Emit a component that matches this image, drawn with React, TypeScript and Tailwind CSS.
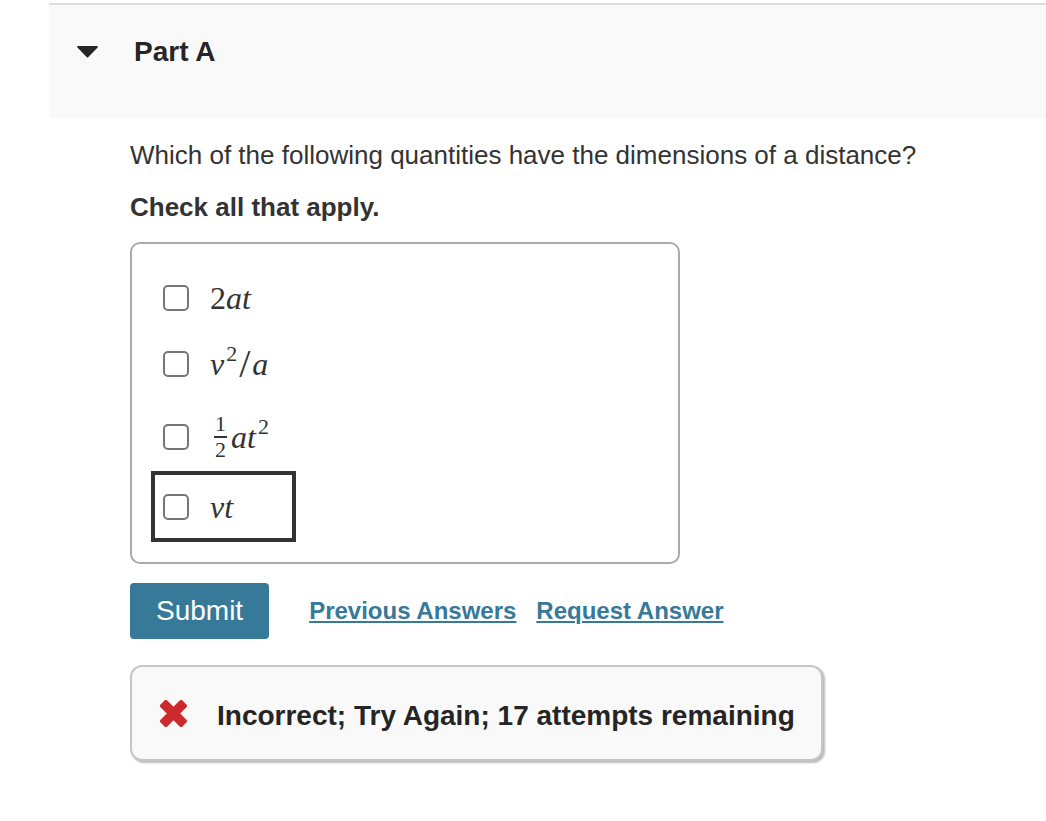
import React, { useState } from 'react';

interface Choice {
  id: string;
  label: string;
  rowClass: string;
  math: React.ReactNode;
}

const Sup: React.FC<{ children: React.ReactNode }> = ({ children }) => (
  <span className="mb-5 ml-0.5 text-[22px] leading-6 not-italic">{children}</span>
);

const choices: Choice[] = [
  {
    id: 'choice-2at',
    label: '2at',
    rowClass: 'h-[66px]',
    math: <><span className="not-italic">2</span>at</>,
  },
  {
    id: 'choice-v2-a',
    label: 'v squared over a',
    rowClass: 'h-[66px]',
    math: <>v<Sup>2</Sup><span className="mx-0.5 text-[40px] not-italic">/</span>a</>,
  },
  {
    id: 'choice-half-at2',
    label: 'one half a t squared',
    rowClass: 'mt-1.5 h-[68px]',
    math: (
      <>
        <span className="mx-1 flex flex-col items-center text-[22px] leading-6 not-italic">
          <span className="border-b-2 border-[#333] px-px">1</span>
          <span>2</span>
        </span>
        at<Sup>2</Sup>
      </>
    ),
  },
  { id: 'choice-vt', label: 'vt', rowClass: 'h-[71px]', math: <>vt</> },
];

const PartHeader: React.FC = () => {
  return (
    <header className="border-t-2 border-[#ddd] bg-[#f9f9f9] px-7 pt-[27px] pb-[46px]">
      <h2 className="text-[28px] leading-10 font-bold text-[#252525]">
        <button type="button" aria-expanded="true" className="flex items-center gap-9">
          <svg viewBox="0 0 21 12" className="h-3 w-[21px]" aria-hidden="true">
            <path d="M1 0h19q1.4.3.6 1.4L11.4 11q-.9 1-1.8 0L.4 1.4Q-.4.3 1 0z" fill="#252525" />
          </svg>
          Part A
        </button>
      </h2>
    </header>
  );
};

const ChoiceList: React.FC = () => {
  const [focused, setFocused] = useState('choice-vt');

  return (
    <fieldset className="mt-[15px] max-w-[550px] rounded-[10px] border-2 border-[#aaa] px-[19px] pt-[21px] pb-5">
      {choices.map((choice) => (
        <div
          key={choice.id}
          className={`flex w-[145px] items-center gap-[21px] border-4 pl-2 ${choice.rowClass} ${
            focused === choice.id ? 'border-[#333]' : 'border-transparent'
          }`}
        >
          <input
            id={choice.id}
            type="checkbox"
            aria-label={choice.label}
            onFocus={() => setFocused(choice.id)}
            className="size-[26px] shrink-0 appearance-none rounded-[5px] border-2 border-[#767676] bg-white outline-none checked:bg-[#367999]"
          />
          <label
            htmlFor={choice.id}
            className="flex items-center font-['Liberation_Serif',serif] text-[32px] leading-9 text-[#333] italic"
          >
            {choice.math}
          </label>
        </div>
      ))}
    </fieldset>
  );
};

const Feedback: React.FC = () => {
  return (
    <div
      role="status"
      className="mt-[26px] flex w-fit items-center gap-[29px] rounded-xl border-2 border-[#c5c5c5] bg-[#f9f9f9] pt-[29px] pr-[26px] pb-[23px] pl-7 text-[28px] leading-10 font-bold text-[#252525] shadow-[2px_2px_2px_#bbb]"
    >
      <svg viewBox="0 0 28 28" className="-mt-1 size-7 shrink-0" fill="#cb2b2d" aria-hidden="true">
        <rect x="-2" y="8.75" width="31" height="9.5" rx="2" transform="rotate(45 13.5 13.5)" />
        <rect x="-2" y="8.75" width="31" height="9.5" rx="2" transform="rotate(-45 13.5 13.5)" />
      </svg>
      <p>Incorrect; Try Again; 17 attempts remaining</p>
    </div>
  );
};

export default function App() {
  return (
    <main className="min-h-screen bg-white pt-[3px] pl-[49px] font-['Liberation_Sans',Arial,sans-serif]">
      <PartHeader />

      <section className="pt-[17px] pr-12 pb-[59px] pl-[81px] text-[26px] leading-10 text-[#333]">
        <p>Which of the following quantities have the dimensions of a distance?</p>
        <p className="mt-3 font-bold">Check all that apply.</p>

        <ChoiceList />

        <div className="mt-[19px] flex items-center">
          <button
            type="button"
            className="h-14 rounded-[4px] bg-[#367999] px-[26px] text-[28px] text-white"
          >
            Submit
          </button>
          <nav className="ml-10 flex gap-5 text-2xl font-bold text-[#367999]">
            <a href="#previous" className="underline decoration-2 underline-offset-2">Previous Answers</a>
            <a href="#request" className="underline decoration-2 underline-offset-2">Request Answer</a>
          </nav>
        </div>

        <Feedback />
      </section>
    </main>
  );
}
